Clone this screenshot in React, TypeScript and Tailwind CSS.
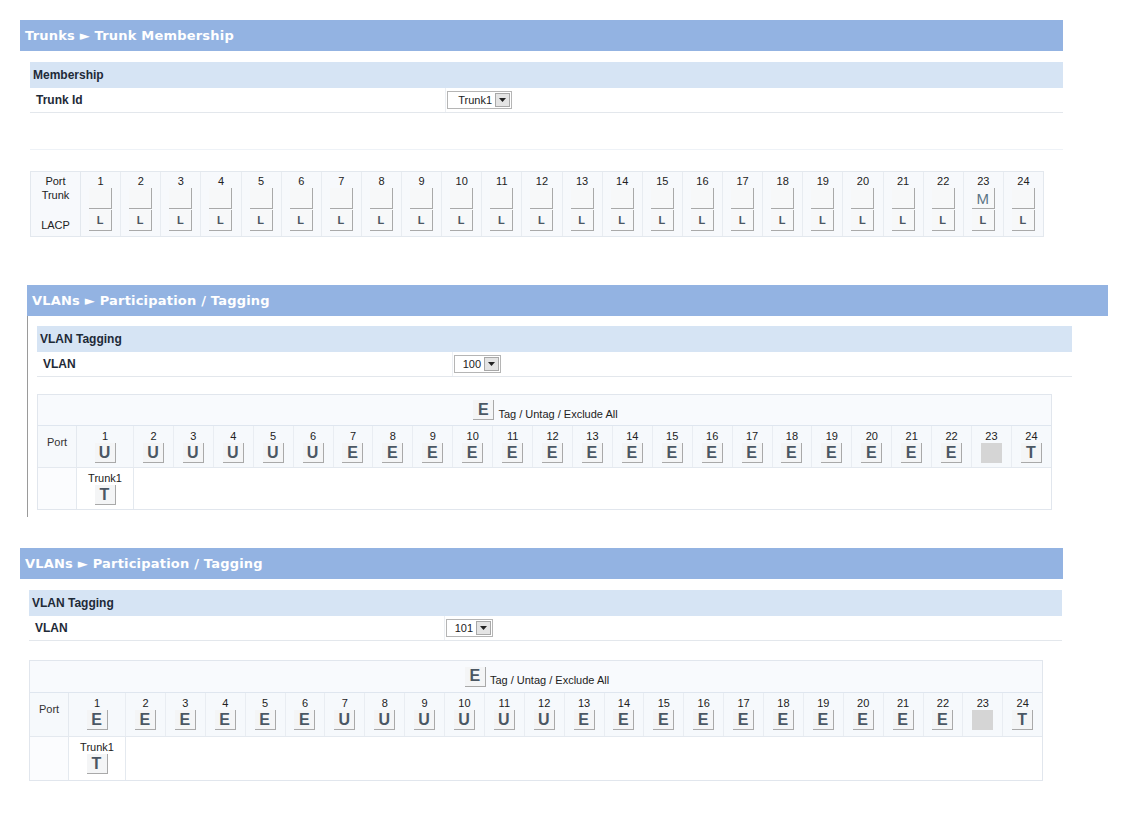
import React from 'react';

const ports = Array.from({ length: 24 }, (_, i) => i + 1);

// tag states per VLAN, 'D' = disabled (trunk member)
const vlan100 = ['U', 'U', 'U', 'U', 'U', 'U', 'E', 'E', 'E', 'E', 'E', 'E', 'E', 'E', 'E', 'E', 'E', 'E', 'E', 'E', 'E', 'E', 'D', 'T'];
const vlan101 = ['E', 'E', 'E', 'E', 'E', 'E', 'U', 'U', 'U', 'U', 'U', 'U', 'E', 'E', 'E', 'E', 'E', 'E', 'E', 'E', 'E', 'E', 'D', 'T'];

const Header: React.FC<{ title: string }> = ({ title }) => (
  <div className="h-[31px] bg-[#93b3e2] flex items-center pl-[5px]">
    <span className="text-white font-bold text-[13px] tracking-[0.2px] font-['DejaVu_Sans',sans-serif]">{title}</span>
  </div>
);

const Select: React.FC<{ value: string; width: string }> = ({ value, width }) => (
  <div className={`flex items-center h-[18px] border border-[#b5b5b5] bg-white ${width}`}>
    <span className="flex-1 text-right pr-[3px] text-[11px] text-[#222]">{value}</span>
    <span className="w-[15px] h-[14px] mr-[1px] bg-[#e4e4e4] border border-[#a8a8a8] flex items-center justify-center">
      <svg width="7" height="4" viewBox="0 0 7 4"><path d="M0 0h7L3.5 4z" fill="#222" /></svg>
    </span>
  </div>
);

const Section: React.FC<{ title: string; label: string; value: string; selWidth: string; width: string }> = ({ title, label, value, selWidth, width }) => (
  <div className={width}>
    <div className="h-[26px] bg-[#d6e4f4] flex items-center pl-[3px] text-[12px] font-bold text-[#1e2a38]">{title}</div>
    <div className="h-[25px] flex border-b border-[#e3e7ec] bg-white">
      <div className="w-[416px] flex items-center pl-[6px] text-[12px] font-bold text-[#1e2a38] border-r border-[#eceff3]">{label}</div>
      <div className="flex items-center pl-[1px]">
        <Select value={value} width={selWidth} />
      </div>
    </div>
  </div>
);

const TagBtn: React.FC<{ v: string }> = ({ v }) =>
  v === 'D' ? (
    <div className="w-[21px] h-[20px] bg-[#d5d5d5]" />
  ) : (
    <div className="w-[21px] h-[20px] bg-[#f4f5f6] border-r border-b border-[#a9a9a9] flex items-center justify-center text-[16px] font-bold text-[#4b5763] leading-none">
      {v}
    </div>
  );

const TagTable: React.FC<{ states: string[]; width: string; tall?: boolean }> = ({ states, width, tall }) => (
  <div className={`${width} border border-[#e1e6ed] text-[11px] text-[#222]`}>
    <div className={`${tall ? 'h-[32px]' : 'h-[31px]'} bg-[#f8fafd] border-b border-[#dfe6ef] flex items-center justify-center pl-[2px]`}>
      <TagBtn v="E" />
      <span className="ml-[4px] mt-[8px]">Tag / Untag / Exclude All</span>
    </div>
    <div className={`flex ${tall ? 'h-[44px]' : 'h-[42px]'} bg-[#f6f9fc] border-b border-[#e4e9ef]`}>
      <div className="w-[39px] pl-[9px] pt-[8px] border-r border-[#e4e9ef] text-[#333]">Port</div>
      {ports.map((p, i) => (
        <div key={p} className={`${i === 0 ? 'w-[57px]' : 'flex-1'} flex flex-col items-center pt-[3px] border-r border-[#e9edf2] last:border-r-0`}>
          <span className="leading-[14px]">{p}</span>
          <TagBtn v={states[i]} />
        </div>
      ))}
    </div>
    <div className={`flex ${tall ? 'h-[43px]' : 'h-[41px]'} bg-white`}>
      <div className="w-[39px] border-r border-[#e4e9ef] bg-[#fbfcfe]" />
      <div className="w-[57px] flex flex-col items-center pt-[3px] border-r border-[#e4e9ef]">
        <span className="leading-[14px]">Trunk1</span>
        <TagBtn v="T" />
      </div>
      <div className="flex-1" />
    </div>
  </div>
);

const TrunkBox: React.FC<{ children?: React.ReactNode; cls?: string }> = ({ children, cls = '' }) => (
  <div className={`w-[23px] h-[21px] bg-[#f7f8f9] border-r border-b border-[#a9a9a9] flex items-center justify-center leading-none ${cls}`}>
    {children}
  </div>
);

const TrunkTable: React.FC = () => (
  <div className="w-[1014px] h-[66px] border border-[#e3e8ee] bg-[#f7f9fc] flex text-[11px] text-[#222]">
    <div className="w-[50px] flex flex-col items-center pt-[2px] border-r border-[#e3e8ee] leading-[14px]">
      <span>Port</span>
      <span>Trunk</span>
      <span className="mt-[16px]">LACP</span>
    </div>
    {ports.map((p) => (
      <div key={p} className="flex-1 flex flex-col items-center pt-[2px] border-r border-[#e8ecf1] last:border-r-0">
        <span className="leading-[14px]">{p}</span>
        <TrunkBox cls="text-[15px] text-[#5b7586]">{p === 23 ? 'M' : ''}</TrunkBox>
        <TrunkBox cls="text-[11px] font-bold text-[#4b5763] mt-[1px]">L</TrunkBox>
      </div>
    ))}
  </div>
);

export default function App() {
  return (
    <div className="w-[1129px] h-[817px] bg-white font-['Liberation_Sans',Arial,sans-serif] overflow-hidden">
      {/* Trunk membership */}
      <div className="ml-[20px] pt-[20px] w-[1043px]">
        <Header title="Trunks ► Trunk Membership" />
        <div className="pl-[10px] pt-[11px]">
          <Section title="Membership" label="Trunk Id" value="Trunk1" selWidth="w-[65px]" width="w-[1033px]" />
          <div className="mt-[36px] h-[1px] bg-[#eef2f7] w-[1033px]" />
          <div className="mt-[21px]">
            <TrunkTable />
          </div>
        </div>
      </div>

      {/* VLAN 100 */}
      <div className="ml-[27px] mt-[48px] w-[1081px] border-l border-[#9a9a9a] pb-[7px]">
        <div className="-ml-[1px]">
          <Header title="VLANs ► Participation / Tagging" />
        </div>
        <div className="pl-[9px] pt-[10px]">
          <Section title="VLAN Tagging" label="VLAN" value="100" selWidth="w-[47px]" width="w-[1035px]" />
          <div className="mt-[17px]">
            <TagTable states={vlan100} width="w-[1015px]" />
          </div>
        </div>
      </div>

      {/* VLAN 101 */}
      <div className="ml-[20px] mt-[31px] w-[1043px]">
        <Header title="VLANs ► Participation / Tagging" />
        <div className="pl-[9px] pt-[11px]">
          <Section title="VLAN Tagging" label="VLAN" value="101" selWidth="w-[47px]" width="w-[1033px]" />
          <div className="mt-[19px]">
            <TagTable states={vlan101} width="w-[1014px]" tall />
          </div>
        </div>
      </div>
    </div>
  );
}
